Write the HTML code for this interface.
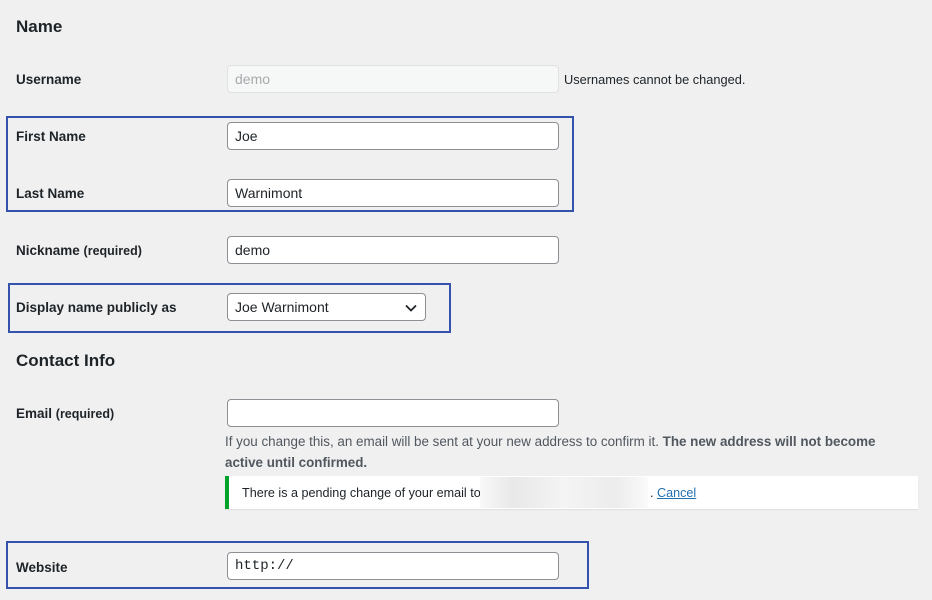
<!DOCTYPE html>
<html><head><style>
body{margin:0;width:932px;height:600px;background:#f0f0f1;font-family:"Liberation Sans",sans-serif;color:#1d2327;position:relative;overflow:hidden}
.a{position:absolute}
h2{position:absolute;margin:0;font-size:17px;font-weight:bold;left:16px}
.l{position:absolute;left:16px;font-size:13.5px;font-weight:bold;line-height:16px}
.l small{font-size:12.5px}
.i{position:absolute;left:227px;width:332px;height:28px;background:#fff;border:1px solid #8c8f94;border-radius:4px;box-sizing:border-box;font-size:14px;line-height:26px;padding-left:7px}
.b{position:absolute;border:2px solid #3552ad;box-sizing:border-box}
</style></head><body>
<h2 style="top:17px">Name</h2>
<div class="l" style="top:72px">Username</div>
<div class="i" style="top:65px;background:#f6f7f7;border-color:#e0e0e0;color:#a7aaad">demo</div>
<div class="a" style="left:564px;top:72px;font-size:12.8px">Usernames cannot be changed.</div>
<div class="b" style="left:6px;top:116px;width:568px;height:96px"></div>
<div class="l" style="top:129px">First Name</div>
<div class="i" style="top:122px">Joe</div>
<div class="l" style="top:186px">Last Name</div>
<div class="i" style="top:179px">Warnimont</div>
<div class="l" style="top:243px">Nickname <small>(required)</small></div>
<div class="i" style="top:236px">demo</div>
<div class="b" style="left:8px;top:283px;width:443px;height:50px"></div>
<div class="l" style="top:300px">Display name publicly as</div>
<div class="i" style="top:293px;width:199px">Joe Warnimont
<svg class="a" style="right:8px;top:10px" width="12" height="8" viewBox="0 0 12 8"><path d="M1 1.5l5 5 5-5" fill="none" stroke="#1d2327" stroke-width="1.8"/></svg></div>
<h2 style="top:351px">Contact Info</h2>
<div class="l" style="top:406px">Email <small>(required)</small></div>
<div class="i" style="top:399px"></div>
<div class="a" style="left:225px;top:431px;font-size:13.4px;line-height:21px;color:#50575e;width:670px">If you change this, an email will be sent at your new address to confirm it. <b>The new address will not become active until confirmed.</b></div>
<div class="a" style="left:225px;top:476px;width:693px;height:33px;background:#fff;border-left:4px solid #00a32a;box-sizing:border-box;box-shadow:0 1px 1px rgba(0,0,0,.08)"></div>
<div class="a" style="left:242px;top:486px;font-size:12.6px">There is a pending change of your email to</div>
<div class="a" style="left:480px;top:477px;width:168px;height:31px;background:linear-gradient(90deg,#f8f8f8,#e8e8e8 20%,#f4f4f4 50%,#ececec 80%,#fafafa)"></div>
<div class="a" style="left:650px;top:486px;font-size:12.6px">. <span style="color:#2271b1;text-decoration:underline">Cancel</span></div>
<div class="b" style="left:6px;top:541px;width:583px;height:48px"></div>
<div class="l" style="top:560px">Website</div>
<div class="i" style="top:552px;font-family:'Liberation Mono',monospace;font-size:14px">http://</div>
</body></html>
